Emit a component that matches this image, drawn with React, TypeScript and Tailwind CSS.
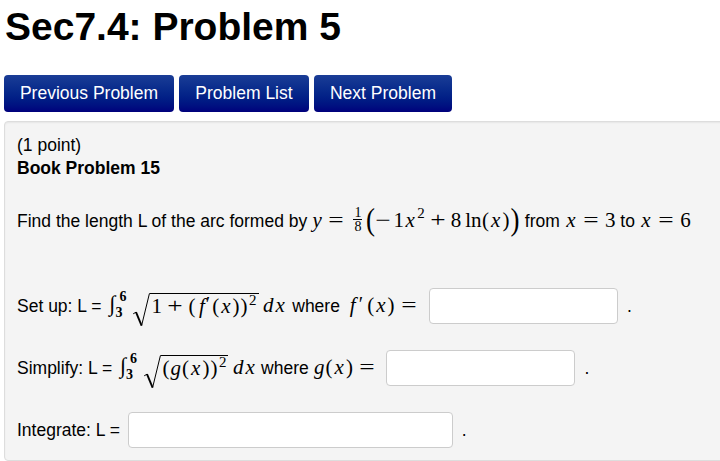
import React from "react";

const serif = "font-['Liberation_Serif',serif]";

const V = ({ children, p = "px-[1.5px]" }: { children: React.ReactNode; p?: string }) => (
  <span className={`italic inline-block ${p}`}>{children}</span>
);

const Eq = () => (
  <span className="inline-block w-[16px] text-center mx-[6px] scale-x-[1.3]">=</span>
);
const Plus = () => (
  <span className="inline-block w-[16px] text-center mx-[5px] scale-x-[1.3]">+</span>
);
const P = ({ c }: { c: string }) => <span className="inline-block px-[0.5px]">{c}</span>;

const Prime = ({ w }: { w: string }) => (
  <span className={`inline-block ${w} text-left text-[20px] relative top-[-2px]`}>′</span>
);

const Frac = () => (
  <span className="inline-flex flex-col items-center align-middle text-[14px] leading-[13px] mx-[3px] relative top-[-2px]">
    <span className="px-[1px]">1</span>
    <span className="w-full border-t border-black" />
    <span className="px-[1px]">8</span>
  </span>
);

const Integral = () => (
  <span className="inline-flex items-center ml-[3px] mr-[6px] relative top-[-2px]">
    <span className="italic text-[22px] leading-[28px]">∫</span>
    <span className="inline-flex flex-col text-[14px] font-bold leading-[13px]">
      <span className="ml-[4px]">6</span>
      <span className="mt-[3px]">3</span>
    </span>
  </span>
);

const Sqrt = ({ children }: { children: React.ReactNode }) => (
  <span className="inline-flex items-start relative top-[4px]">
    <svg width="18" height="34" viewBox="0 0 18 34" className="shrink-0">
      <path d="M1.2 20.8 L4 19.2" stroke="black" strokeWidth="1" fill="none" />
      <path d="M4 19.2 L9.6 32.6" stroke="black" strokeWidth="1.9" fill="none" />
      <path d="M9.6 32.6 L17.4 0.6 L18 0.6" stroke="black" strokeWidth="1" fill="none" />
    </svg>
    <span className="border-t-[1.2px] border-black leading-[20px] pt-[2px] pb-[2px] pl-[1px] pr-[2px] whitespace-nowrap">
      {children}
    </span>
  </span>
);

const Input = ({ w }: { w: string }) => (
  <input
    type="text"
    className={`${w} h-[36px] bg-white border border-[#cccccc] rounded-[4px] shrink-0 outline-none`}
  />
);

const Sup2 = () => <sup className="text-[15px] relative top-[-8px] ml-[1px]">2</sup>;

export default function App() {
  return (
    <div className="w-[720px] h-[461px] overflow-hidden bg-white font-['Liberation_Sans',Arial,sans-serif] text-black">
      <h1 className="mt-[5px] ml-[5px] text-[39px] leading-[44px] font-bold whitespace-nowrap">
        Sec7.4: Problem 5
      </h1>
      <div className="mt-[26px] ml-[4px] flex gap-[5px]">
        {[
          ["Previous Problem", "w-[170px]"],
          ["Problem List", "w-[130px]"],
          ["Next Problem", "w-[138px]"],
        ].map(([t, w]) => (
          <button
            key={t}
            className={`${w} h-[37px] rounded-[4px] bg-gradient-to-b from-[#1a3d96] to-[#00007c] text-white text-[17.5px] leading-[37px] text-center`}
          >
            {t}
          </button>
        ))}
      </div>
      <div className="mt-[9px] ml-[4px] w-[730px] h-[340px] bg-[#f4f4f4] border border-[#dddddd] rounded-[4px] shadow-[inset_0_1px_2px_rgba(0,0,0,0.06)] pl-[12px] pt-[12px] text-[17.5px]">
        <div className="leading-[23px]">(1 point)</div>
        <div className="leading-[23px] font-bold">Book Problem 15</div>
        <div className="mt-[23px] h-[36px] flex items-center whitespace-nowrap">
          <span>Find the length L of the arc formed by&nbsp;</span>
          <span className={`${serif} text-[21px] inline-flex items-center`}>
            <V p="px-[0.5px]">y</V>
            <Eq />
            <Frac />
            <span className="text-[27px] leading-none relative top-[-1px] scale-y-[1.15] inline-block px-[0.5px]">(</span>
            <span className="inline-block w-[16px] text-center scale-x-[1.3]">−</span>
            <span className="ml-[2px]">1</span>
            <V>x</V>
            <Sup2 />
            <Plus />
            <span>8</span>
            <span className="ml-[4px]">ln</span>
            <P c="(" />
            <V>x</V>
            <P c=")" />
            <span className="text-[27px] leading-none relative top-[-1px] scale-y-[1.15] inline-block px-[0.5px]">)</span>
          </span>
          <span>&nbsp;from&nbsp;</span>
          <span className={`${serif} text-[21px] inline-flex items-center`}>
            <V>x</V>
            <Eq />3
          </span>
          <span>&nbsp;to&nbsp;</span>
          <span className={`${serif} text-[21px] inline-flex items-center`}>
            <V>x</V>
            <Eq />6
          </span>
        </div>

        <div className="mt-[49px] h-[36px] flex items-center whitespace-nowrap">
          <span>Set up: L =&nbsp;</span>
          <span className={`${serif} text-[21px] inline-flex items-center`}>
            <Integral />
            <Sqrt>
              1<Plus />
              <P c="(" />
              <V p="pl-[3px] pr-[1px]">f</V>
              <Prime w="w-[6px]" />
              <P c="(" />
              <V>x</V>
              <P c=")" />
              <P c=")" />
              <Sup2 />
            </Sqrt>
            <span className="ml-[4px]">
              <V p="px-[0.5px]">d</V>
              <V>x</V>
            </span>
          </span>
          <span className="ml-[1px]">&nbsp;where&nbsp;</span>
          <span className={`${serif} text-[21px] inline-flex items-center`}>
            <V p="pl-[5px] pr-[3px]">f</V>
            <Prime w="w-[5px]" />
            <span className="ml-[3px]" />
            <P c="(" />
            <V>x</V>
            <P c=")" />
            <Eq />
          </span>
          <span className="ml-[6px]" />
          <Input w="w-[189px]" />
          <span className="ml-[9px]">.</span>
        </div>

        <div className="mt-[26px] h-[36px] flex items-center whitespace-nowrap">
          <span>Simplify: L =&nbsp;</span>
          <span className={`${serif} text-[21px] inline-flex items-center`}>
            <Integral />
            <Sqrt>
              <P c="(" />
              <V p="px-[0.5px]">g</V>
              <P c="(" />
              <V>x</V>
              <P c=")" />
              <P c=")" />
              <Sup2 />
            </Sqrt>
            <span className="ml-[4px]">
              <V p="px-[0.5px]">d</V>
              <V>x</V>
            </span>
          </span>
          <span>&nbsp;where&nbsp;</span>
          <span className={`${serif} text-[21px] inline-flex items-center`}>
            <V p="px-[0.5px]">g</V>
            <P c="(" />
            <V>x</V>
            <P c=")" />
            <Eq />
          </span>
          <span className="ml-[5px]" />
          <Input w="w-[189px]" />
          <span className="ml-[9px]">.</span>
        </div>

        <div className="mt-[26px] h-[36px] flex items-center whitespace-nowrap">
          <span>Integrate: L =&nbsp;</span>
          <span className="ml-[3px]" />
          <Input w="w-[325px]" />
          <span className="ml-[9px]">.</span>
        </div>
      </div>
    </div>
  );
}
